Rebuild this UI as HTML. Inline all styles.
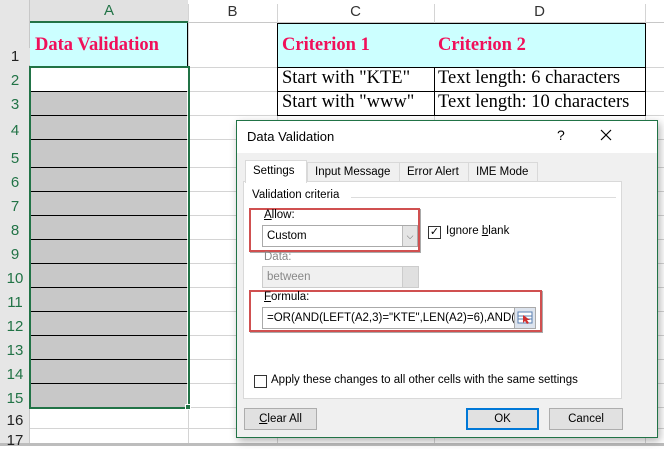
<!DOCTYPE html>
<html><head><style>
*{margin:0;padding:0;box-sizing:border-box}
body{width:664px;height:446px;overflow:hidden;background:#fff;position:relative;font-family:"Liberation Sans",sans-serif}
.a{position:absolute}
.hl{position:absolute;height:1px;background:#d4d4d4}
.vl{position:absolute;width:1px;background:#d4d4d4}
.rn{position:absolute;left:0;width:30px;text-align:center;font-size:15px;color:#222;background:#e6e6e6}
.serif{font-family:"Liberation Serif",serif}
.ui{font-family:"Liberation Sans",sans-serif;font-size:11.5px;color:#000;white-space:nowrap}
</style></head><body>
<div class="a" style="left:0;top:0;width:664px;height:23px;background:#fff;border-bottom:1px solid #c8c8c8"></div>
<div class="a" style="left:0;top:0;width:30px;height:446px;background:#e6e6e6;border-right:1px solid #c8c8c8"></div>
<div class="a" style="left:30px;top:0;width:158px;height:23px;background:#e1e1e1;border-bottom:2px solid #217346;text-align:center;font-size:15px;line-height:22px;color:#217346">A</div>
<div class="a" style="left:188px;top:3px;width:89px;text-align:center;font-size:15px;color:#333">B</div>
<div class="a" style="left:277px;top:3px;width:157px;text-align:center;font-size:15px;color:#333">C</div>
<div class="a" style="left:434px;top:3px;width:211px;text-align:center;font-size:15px;color:#333">D</div>
<div class="vl" style="left:188px;top:4px;height:442px"></div>
<div class="vl" style="left:277px;top:4px;height:442px"></div>
<div class="vl" style="left:434px;top:4px;height:442px"></div>
<div class="vl" style="left:645px;top:4px;height:442px"></div>
<div class="hl" style="left:30px;top:67px;width:634px"></div>
<div class="hl" style="left:30px;top:91px;width:634px"></div>
<div class="hl" style="left:30px;top:115px;width:634px"></div>
<div class="hl" style="left:30px;top:139px;width:634px"></div>
<div class="hl" style="left:30px;top:167px;width:634px"></div>
<div class="hl" style="left:30px;top:191px;width:634px"></div>
<div class="hl" style="left:30px;top:215px;width:634px"></div>
<div class="hl" style="left:30px;top:239px;width:634px"></div>
<div class="hl" style="left:30px;top:263px;width:634px"></div>
<div class="hl" style="left:30px;top:287px;width:634px"></div>
<div class="hl" style="left:30px;top:311px;width:634px"></div>
<div class="hl" style="left:30px;top:335px;width:634px"></div>
<div class="hl" style="left:30px;top:359px;width:634px"></div>
<div class="hl" style="left:30px;top:383px;width:634px"></div>
<div class="hl" style="left:30px;top:407px;width:634px"></div>
<div class="hl" style="left:30px;top:428px;width:634px"></div>
<div class="a" style="left:0;top:443px;width:664px;height:3px;background:#bdbdbd"></div>
<div class="rn" style="top:48px;color:#222">1</div>
<div class="rn" style="top:72px;color:#217346">2</div>
<div class="rn" style="top:96px;color:#217346">3</div>
<div class="rn" style="top:122px;color:#217346">4</div>
<div class="rn" style="top:150px;color:#217346">5</div>
<div class="rn" style="top:174px;color:#217346">6</div>
<div class="rn" style="top:198px;color:#217346">7</div>
<div class="rn" style="top:222px;color:#217346">8</div>
<div class="rn" style="top:246px;color:#217346">9</div>
<div class="rn" style="top:270px;color:#217346">10</div>
<div class="rn" style="top:294px;color:#217346">11</div>
<div class="rn" style="top:318px;color:#217346">12</div>
<div class="rn" style="top:342px;color:#217346">13</div>
<div class="rn" style="top:366px;color:#217346">14</div>
<div class="rn" style="top:390px;color:#217346">15</div>
<div class="rn" style="top:412px;background:none">16</div>
<div class="rn" style="top:432px;background:none">17</div>
<div class="a serif" style="left:30px;top:23px;width:158px;height:44px;background:#ccffff;border-right:1px solid #000;font-weight:bold;font-size:18.5px;color:#f0105a;padding:12px 0 0 5px;white-space:nowrap">Data Validation</div>
<div class="a serif" style="left:277px;top:23px;width:158px;height:45px;background:#ccffff;border:1px solid #000;font-weight:bold;font-size:18.5px;color:#f0105a;padding:11px 0 0 4px">Criterion 1</div>
<div class="a serif" style="left:434px;top:23px;width:212px;height:45px;background:#ccffff;border:1px solid #000;border-left:none;font-weight:bold;font-size:18.5px;color:#f0105a;padding:11px 0 0 4px">Criterion 2</div>
<div class="a serif" style="left:277px;top:67px;width:158px;height:25px;border:1px solid #000;font-size:18.5px;padding:0 0 0 4px;white-space:nowrap">Start with "KTE"</div>
<div class="a serif" style="left:434px;top:67px;width:212px;height:25px;border:1px solid #000;border-left:none;font-size:18.5px;padding:0 0 0 4px;white-space:nowrap">Text length: 6 characters</div>
<div class="a serif" style="left:277px;top:91px;width:158px;height:25px;border:1px solid #000;font-size:18.5px;padding:0 0 0 4px;white-space:nowrap">Start with "www"</div>
<div class="a serif" style="left:434px;top:91px;width:212px;height:25px;border:1px solid #000;border-left:none;font-size:18.5px;padding:0 0 0 4px;white-space:nowrap">Text length: 10 characters</div>
<div class="a" style="left:31px;top:91px;width:156px;height:316px;background:#c8c8c8"></div>
<div class="a" style="left:31px;top:91px;width:156px;height:1px;background:#000"></div>
<div class="a" style="left:31px;top:115px;width:156px;height:1px;background:#000"></div>
<div class="a" style="left:31px;top:139px;width:156px;height:1px;background:#000"></div>
<div class="a" style="left:31px;top:167px;width:156px;height:1px;background:#000"></div>
<div class="a" style="left:31px;top:191px;width:156px;height:1px;background:#000"></div>
<div class="a" style="left:31px;top:215px;width:156px;height:1px;background:#000"></div>
<div class="a" style="left:31px;top:239px;width:156px;height:1px;background:#000"></div>
<div class="a" style="left:31px;top:263px;width:156px;height:1px;background:#000"></div>
<div class="a" style="left:31px;top:287px;width:156px;height:1px;background:#000"></div>
<div class="a" style="left:31px;top:311px;width:156px;height:1px;background:#000"></div>
<div class="a" style="left:31px;top:335px;width:156px;height:1px;background:#000"></div>
<div class="a" style="left:31px;top:359px;width:156px;height:1px;background:#000"></div>
<div class="a" style="left:31px;top:383px;width:156px;height:1px;background:#000"></div>
<div class="a" style="left:29px;top:66px;width:161px;height:343px;border:2px solid #217346"></div>
<div class="a" style="left:185px;top:404px;width:6px;height:6px;background:#217346;border:1px solid #fff"></div>
<div class="a" style="left:236px;top:120px;width:422px;height:318px;background:#f0f0f0;border:1px solid #217346;box-shadow:2px 3px 8px rgba(0,0,0,.3)">
 <div class="a" style="left:0;top:0;width:420px;height:32px;background:#fff"></div>
 <div class="a ui" style="left:10px;top:8px;font-size:13px">Data Validation</div>
 <div class="a ui" style="left:320px;top:6px;font-size:14px">?</div>
 <svg class="a" style="left:363px;top:8px" width="12" height="12"><path d="M1 1L11 11M11 1L1 11" stroke="#000" stroke-width="1.2"/></svg>
 <div class="a" style="left:6px;top:60px;width:379px;height:218px;background:#fff;border:1px solid #d9d9d9"></div>
 <div class="a ui" style="left:8px;top:39px;width:62px;height:23px;background:#fff;border:1px solid #d9d9d9;border-bottom:none;padding:4px 0 0 7px">Settings</div>
 <div class="a ui" style="left:70px;top:41px;width:93px;height:20px;background:#f0f0f0;border:1px solid #d9d9d9;padding:3px 0 0 7px">Input Message</div>
 <div class="a ui" style="left:162px;top:41px;width:70px;height:20px;background:#f0f0f0;border:1px solid #d9d9d9;padding:3px 0 0 7px">Error Alert</div>
 <div class="a ui" style="left:231px;top:41px;width:70px;height:20px;background:#f0f0f0;border:1px solid #d9d9d9;padding:3px 0 0 7px">IME Mode</div>
 <div class="a ui" style="left:15px;top:68px">Validation criteria</div>
 <div class="a" style="left:114px;top:76px;width:265px;height:1px;background:#dcdcdc"></div>
 <div class="a" style="left:12px;top:87px;width:171px;height:44px;border:2px solid #d05050;box-shadow:1px 1px 0 #aaa"></div>
 <div class="a ui" style="left:27px;top:88px"><u>A</u>llow:</div>
 <div class="a ui" style="left:25px;top:104px;width:156px;height:22px;background:#fff;border:1px solid #aaa;padding:4px 0 0 4px">Custom</div>
 <div class="a" style="left:165px;top:105px;width:15px;height:20px;background:#e5e5e5;border-left:1px solid #bbb;color:#555;font-size:9px;text-align:center;line-height:20px">⌵</div>
 <div class="a" style="left:191px;top:105px;width:13px;height:13px;border:1px solid #333;background:#fff;font-size:11px;line-height:11px;text-align:center">✓</div>
 <div class="a ui" style="left:209px;top:104px">Ignore <u>b</u>lank</div>
 <div class="a ui" style="left:27px;top:130px;color:#888">Data:</div>
 <div class="a ui" style="left:25px;top:145px;width:157px;height:22px;background:#f0f0f0;border:1px solid #ccc;padding:4px 0 0 4px;color:#888">between</div>
 <div class="a" style="left:165px;top:146px;width:16px;height:20px;background:#e0e0e0;border-left:1px solid #ccc"></div>
 <div class="a" style="left:12px;top:169px;width:293px;height:42px;border:2px solid #d05050;box-shadow:1px 1px 0 #aaa"></div>
 <div class="a ui" style="left:27px;top:170px"><u>F</u>ormula:</div>
 <div class="a ui" style="left:25px;top:186px;width:274px;height:22px;background:#fff;border:1px solid #aaa;padding:4px 0 0 4px;overflow:hidden">=OR(AND(LEFT(A2,3)="KTE",LEN(A2)=6),AND(LEFT</div>
 <div class="a" style="left:277px;top:187px;width:21px;height:20px;background:#dde4ee;border-left:1px solid #aaa">
  <svg width="21" height="20"><rect x="3" y="4" width="14" height="11" fill="#fff" stroke="#5a7fb0"/><line x1="3" y1="8" x2="17" y2="8" stroke="#5a7fb0"/><line x1="3" y1="11" x2="17" y2="11" stroke="#5a7fb0"/><path d="M8 7l7 5-3 0 2 3-2 1-2-3-2 2z" fill="#d03030"/></svg>
 </div>
 <div class="a" style="left:17px;top:254px;width:13px;height:13px;border:1px solid #333;background:#fff"></div>
 <div class="a ui" style="left:34px;top:253px">Apply these changes to all other cells with the same settings</div>
 <div class="a ui" style="left:7px;top:287px;width:73px;height:22px;background:#e1e1e1;border:1px solid #adadad;text-align:center;line-height:20px"><u>C</u>lear All</div>
 <div class="a ui" style="left:229px;top:287px;width:73px;height:22px;background:#e1e1e1;border:2px solid #0078d7;text-align:center;line-height:18px">OK</div>
 <div class="a ui" style="left:312px;top:287px;width:74px;height:22px;background:#e1e1e1;border:1px solid #adadad;text-align:center;line-height:20px">Cancel</div>
</div>
</body></html>
